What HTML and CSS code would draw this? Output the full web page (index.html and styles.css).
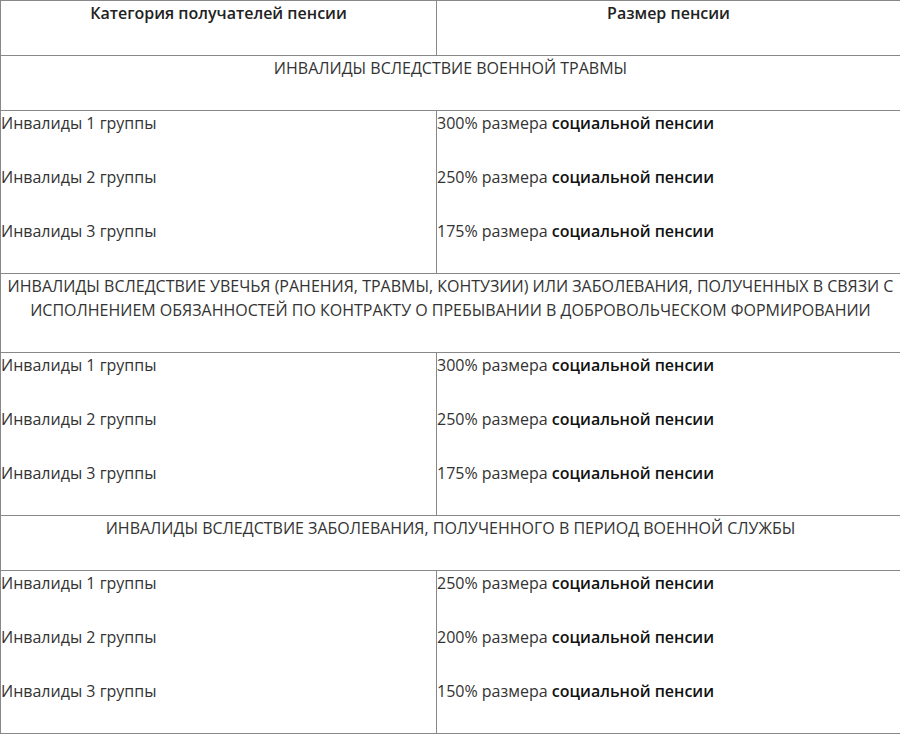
FILE: index.html
```html
<!DOCTYPE html>
<html lang="ru">
<head>
<meta charset="utf-8">
<link rel="stylesheet" href="styles.css">
</head>
<body>
<table class="pension">
  <colgroup><col class="c1"><col class="c2"></colgroup>
  <tr class="head">
    <td class="center"><p>Категория получателей пенсии</p></td>
    <td class="center"><p>Размер пенсии</p></td>
  </tr>
  <tr>
    <td class="center" colspan="2"><p>ИНВАЛИДЫ ВСЛЕДСТВИЕ ВОЕННОЙ ТРАВМЫ</p></td>
  </tr>
  <tr>
    <td><p>Инвалиды 1 группы</p><p>Инвалиды 2 группы</p><p>Инвалиды 3 группы</p></td>
    <td><p>300% размера <b>социальной пенсии</b></p><p>250% размера <b>социальной пенсии</b></p><p>175% размера <b>социальной пенсии</b></p></td>
  </tr>
  <tr>
    <td class="center" colspan="2"><p>ИНВАЛИДЫ ВСЛЕДСТВИЕ УВЕЧЬЯ (РАНЕНИЯ, ТРАВМЫ, КОНТУЗИИ) ИЛИ ЗАБОЛЕВАНИЯ, ПОЛУЧЕННЫХ В СВЯЗИ С ИСПОЛНЕНИЕМ ОБЯЗАННОСТЕЙ ПО КОНТРАКТУ О ПРЕБЫВАНИИ В ДОБРОВОЛЬЧЕСКОМ ФОРМИРОВАНИИ</p></td>
  </tr>
  <tr>
    <td><p>Инвалиды 1 группы</p><p>Инвалиды 2 группы</p><p>Инвалиды 3 группы</p></td>
    <td><p>300% размера <b>социальной пенсии</b></p><p>250% размера <b>социальной пенсии</b></p><p>175% размера <b>социальной пенсии</b></p></td>
  </tr>
  <tr>
    <td class="center" colspan="2"><p>ИНВАЛИДЫ ВСЛЕДСТВИЕ ЗАБОЛЕВАНИЯ, ПОЛУЧЕННОГО В ПЕРИОД ВОЕННОЙ СЛУЖБЫ</p></td>
  </tr>
  <tr>
    <td><p>Инвалиды 1 группы</p><p>Инвалиды 2 группы</p><p>Инвалиды 3 группы</p></td>
    <td><p>250% размера <b>социальной пенсии</b></p><p>200% размера <b>социальной пенсии</b></p><p>150% размера <b>социальной пенсии</b></p></td>
  </tr>
</table>
</body>
</html>
```
FILE: styles.css
```css
html, body {
  margin: 0;
  padding: 0;
  background: #fff;
}
body {
  font-family: "Open Sans", "Noto Sans", sans-serif;
  font-size: 16px;
  color: #333;
}
.pension {
  border-collapse: collapse;
  width: 900px;
  table-layout: fixed;
}
.c1 { width: 436px; }
.c2 { width: 464px; }
.pension td {
  border: 1px solid #888;
  padding: 0;
  vertical-align: top;
  text-align: left;
}
.pension td.center { text-align: center; }
.pension .head td { font-weight: 600; color: #222; }
.pension p {
  margin: 0 0 30px;
  line-height: 24px;
}
.pension b {
  font-weight: 600;
  color: #111;
}
```
